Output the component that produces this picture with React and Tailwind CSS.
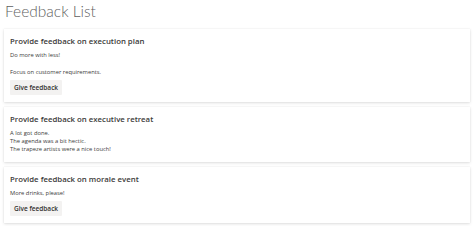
export default function App() {
  const cards = [
    { title: "Provide feedback on execution plan", body: "Do more with less!\n\nFocus on customer requirements.", button: true },
    { title: "Provide feedback on executive retreat", body: "A lot got done.\nThe agenda was a bit hectic.\nThe trapeze artists were a nice touch!", button: false },
    { title: "Provide feedback on morale event", body: "More drinks, please!", button: true },
  ];

  return (
    <div
      className="w-[474px] h-[226px] bg-white overflow-hidden text-[#323130]"
      style={{ fontFamily: '"Open Sans", "Noto Sans", sans-serif' }}
    >
      {/* page heading */}
      <h1
        className="pl-[5px] pt-[1px] h-[29px] text-[15.5px] leading-[20px] font-light text-[#5f5f5f]"
        style={{ fontFamily: 'Lato, "Open Sans", sans-serif' }}
      >
        Feedback List
      </h1>
      <div className="flex flex-col gap-[5px] px-[4px]">
        {cards.map((c) => (
          <div
            key={c.title}
            className={
              "flex flex-col items-start bg-white pt-[6px] px-[6px] shadow-[0_1px_3px_rgba(0,0,0,0.13),0_0_1px_rgba(0,0,0,0.1)] " +
              (c.button ? "pb-[7px]" : "pb-[8px]")
            }
          >
            <h2 className="text-[7.8px] leading-[13px] font-semibold text-[#3b3a39]">{c.title}</h2>
            <p className="mt-[3px] text-[5.8px] leading-[8.3px] whitespace-pre-wrap text-[#3b3a39]">{c.body}</p>
            {c.button && (
              <button className="mt-[4px] h-[15px] px-[4px] bg-[#f3f2f1] text-[6.5px] leading-[15px] font-semibold rounded-[1px]">
                Give feedback
              </button>
            )}
          </div>
        ))}
      </div>
    </div>
  );
}
